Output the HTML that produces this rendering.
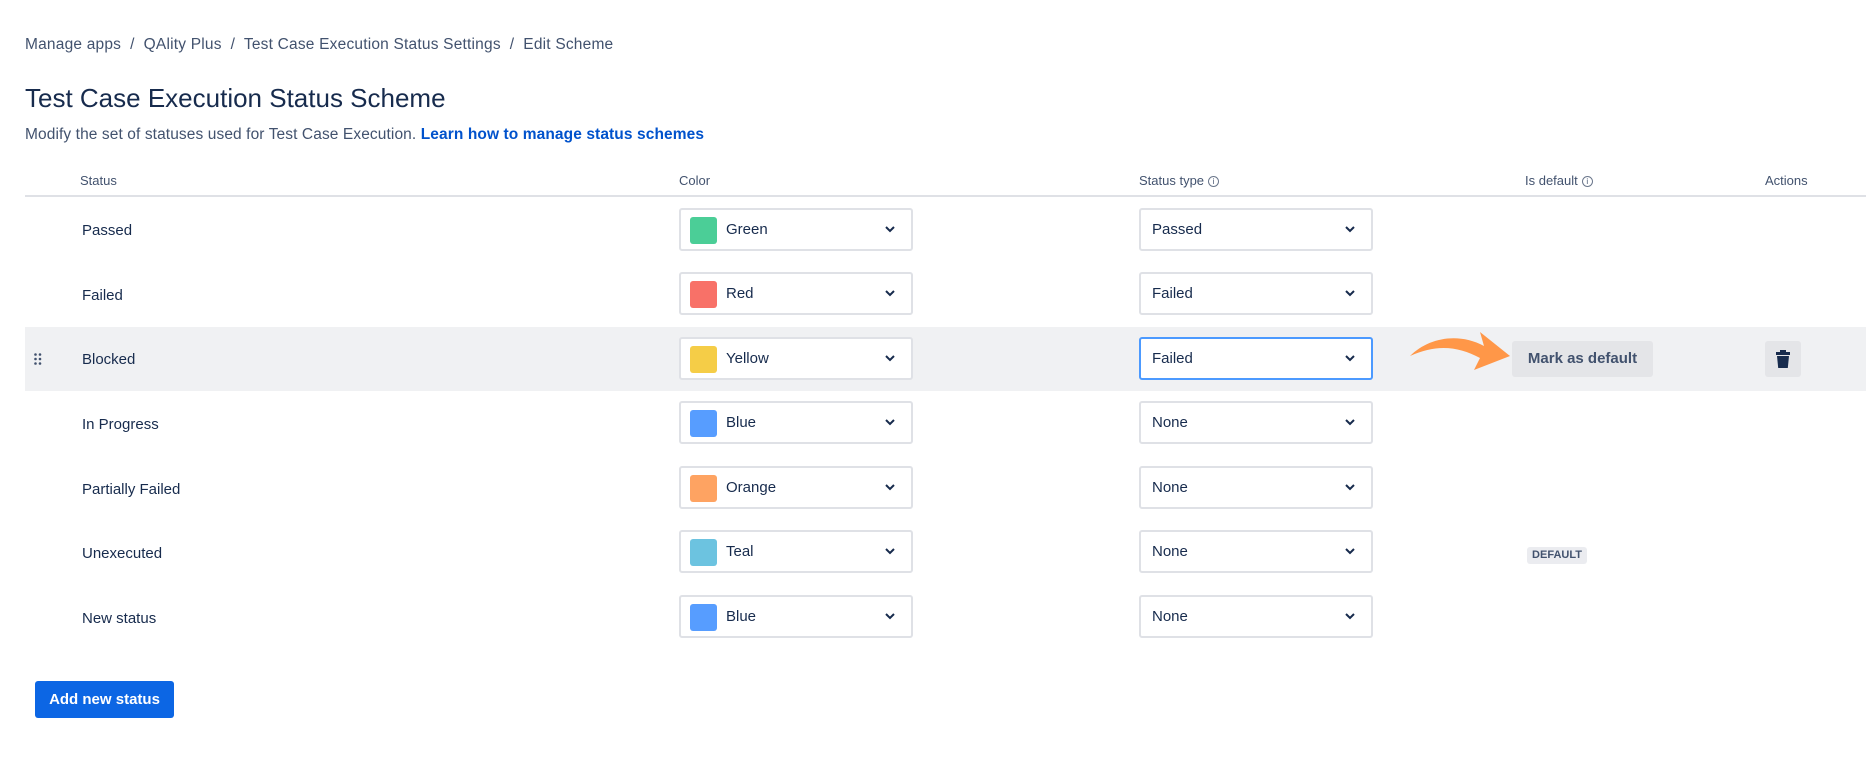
<!DOCTYPE html>
<html><head><meta charset="utf-8"><style>
*{box-sizing:border-box;margin:0;padding:0}
body{width:1870px;height:780px;background:#fff;font-family:"Liberation Sans",sans-serif;color:#172b4d;position:relative;overflow:hidden}
.a{position:absolute;white-space:nowrap}
.bc{left:25px;top:36px;font-size:15.5px;color:#42526e;letter-spacing:0.2px}
.h1{left:25px;top:83px;font-size:26px;color:#172b4d}
.desc{left:25px;top:126px;font-size:15.5px;color:#42526e;letter-spacing:0.1px}
.desc b{color:#0052cc}
.th{top:173px;font-size:13px;color:#42526e}
.th i{display:inline-block;width:11px;height:11px;border:1px solid #6b778c;border-radius:50%;font-size:8px;font-style:normal;text-align:center;line-height:9px;margin-left:4px;vertical-align:1px}
.hl{left:25px;top:195px;width:1841px;height:2px;background:#dfe1e6}
.rowbg{left:25px;top:327px;width:1841px;height:64px;background:#f0f1f3}
.st{left:82px;font-size:15px;color:#172b4d}
.sel{width:234px;height:43px;border:2px solid #dfe1e6;border-radius:3px;background:#fff;font-size:15px;color:#172b4d}
.sel .sw{position:absolute;left:9px;top:7px;width:27px;height:27px;border-radius:3px}
.sel .t{position:absolute;top:11px}
.sel svg{position:absolute;right:16px;top:15px}
.foc{border-color:#4c9aff}
</style></head><body>
<div class="a bc">Manage apps &nbsp;/&nbsp; QAlity Plus &nbsp;/&nbsp; Test Case Execution Status Settings &nbsp;/&nbsp; Edit Scheme</div>
<div class="a h1">Test Case Execution Status Scheme</div>
<div class="a desc">Modify the set of statuses used for Test Case Execution. <b>Learn how to manage status schemes</b></div>
<div class="a th" style="left:80px">Status</div>
<div class="a th" style="left:679px">Color</div>
<div class="a th" style="left:1139px">Status type<i>i</i></div>
<div class="a th" style="left:1525px">Is default<i>i</i></div>
<div class="a th" style="left:1765px">Actions</div>
<div class="a hl"></div>
<div class="a rowbg"></div>
<svg class="a" style="left:34px;top:353px" width="8" height="12"><g fill="#42526e"><circle cx="1.5" cy="1.5" r="1.3"/><circle cx="6" cy="1.5" r="1.3"/><circle cx="1.5" cy="6" r="1.3"/><circle cx="6" cy="6" r="1.3"/><circle cx="1.5" cy="10.5" r="1.3"/><circle cx="6" cy="10.5" r="1.3"/></g></svg>

<div class="a st" style="top:222px">Passed</div>
<div class="a st" style="top:287px">Failed</div>
<div class="a st" style="top:351px">Blocked</div>
<div class="a st" style="top:416px">In Progress</div>
<div class="a st" style="top:481px">Partially Failed</div>
<div class="a st" style="top:545px">Unexecuted</div>
<div class="a st" style="top:610px">New status</div>

<div class="a sel" style="left:679px;top:208px"><span class="sw" style="background:#4bce97"></span><span class="t" style="left:45px">Green</span><svg width="10" height="8"><path d="M1 2l4 4 4-4" stroke="#172b4d" stroke-width="2" fill="none"/></svg></div>
<div class="a sel" style="left:679px;top:272px"><span class="sw" style="background:#f87168"></span><span class="t" style="left:45px">Red</span><svg width="10" height="8"><path d="M1 2l4 4 4-4" stroke="#172b4d" stroke-width="2" fill="none"/></svg></div>
<div class="a sel" style="left:679px;top:337px"><span class="sw" style="background:#f5cd47"></span><span class="t" style="left:45px">Yellow</span><svg width="10" height="8"><path d="M1 2l4 4 4-4" stroke="#172b4d" stroke-width="2" fill="none"/></svg></div>
<div class="a sel" style="left:679px;top:401px"><span class="sw" style="background:#579dff"></span><span class="t" style="left:45px">Blue</span><svg width="10" height="8"><path d="M1 2l4 4 4-4" stroke="#172b4d" stroke-width="2" fill="none"/></svg></div>
<div class="a sel" style="left:679px;top:466px"><span class="sw" style="background:#fea362"></span><span class="t" style="left:45px">Orange</span><svg width="10" height="8"><path d="M1 2l4 4 4-4" stroke="#172b4d" stroke-width="2" fill="none"/></svg></div>
<div class="a sel" style="left:679px;top:530px"><span class="sw" style="background:#6cc3e0"></span><span class="t" style="left:45px">Teal</span><svg width="10" height="8"><path d="M1 2l4 4 4-4" stroke="#172b4d" stroke-width="2" fill="none"/></svg></div>
<div class="a sel" style="left:679px;top:595px"><span class="sw" style="background:#579dff"></span><span class="t" style="left:45px">Blue</span><svg width="10" height="8"><path d="M1 2l4 4 4-4" stroke="#172b4d" stroke-width="2" fill="none"/></svg></div>

<div class="a sel" style="left:1139px;top:208px"><span class="t" style="left:11px">Passed</span><svg width="10" height="8"><path d="M1 2l4 4 4-4" stroke="#172b4d" stroke-width="2" fill="none"/></svg></div>
<div class="a sel" style="left:1139px;top:272px"><span class="t" style="left:11px">Failed</span><svg width="10" height="8"><path d="M1 2l4 4 4-4" stroke="#172b4d" stroke-width="2" fill="none"/></svg></div>
<div class="a sel foc" style="left:1139px;top:337px"><span class="t" style="left:11px">Failed</span><svg width="10" height="8"><path d="M1 2l4 4 4-4" stroke="#172b4d" stroke-width="2" fill="none"/></svg></div>
<div class="a sel" style="left:1139px;top:401px"><span class="t" style="left:11px">None</span><svg width="10" height="8"><path d="M1 2l4 4 4-4" stroke="#172b4d" stroke-width="2" fill="none"/></svg></div>
<div class="a sel" style="left:1139px;top:466px"><span class="t" style="left:11px">None</span><svg width="10" height="8"><path d="M1 2l4 4 4-4" stroke="#172b4d" stroke-width="2" fill="none"/></svg></div>
<div class="a sel" style="left:1139px;top:530px"><span class="t" style="left:11px">None</span><svg width="10" height="8"><path d="M1 2l4 4 4-4" stroke="#172b4d" stroke-width="2" fill="none"/></svg></div>
<div class="a sel" style="left:1139px;top:595px"><span class="t" style="left:11px">None</span><svg width="10" height="8"><path d="M1 2l4 4 4-4" stroke="#172b4d" stroke-width="2" fill="none"/></svg></div>

<svg class="a" style="left:1408px;top:328px" width="104" height="46" viewBox="0 0 104 46"><path d="M2 28 C20 10 50 4 76 18 L72 4 L102 28 L66 42 L72 30 C50 18 28 16 2 28Z" fill="#ff9748"/></svg>
<div class="a" style="left:1512px;top:341px;width:141px;height:36px;background:#e4e5e8;border-radius:3px;font-size:15px;font-weight:bold;color:#42526e;text-align:center;line-height:36px">Mark as default</div>
<div class="a" style="left:1765px;top:341px;width:36px;height:36px;background:#e4e5e8;border-radius:3px"><svg width="36" height="36" viewBox="0 0 36 36" style="position:absolute;left:0;top:0"><rect x="11" y="11" width="14" height="3" fill="#172b4d"/><rect x="15" y="9" width="6" height="3" fill="#172b4d"/><path d="M12 15h12l-1.2 12h-9.6z" fill="#172b4d"/></svg></div>
<div class="a" style="left:1527px;top:547px;width:60px;height:17px;background:#ebecf0;border-radius:3px;font-size:11px;font-weight:bold;color:#42526e;text-align:center;line-height:17px">DEFAULT</div>
<div class="a" style="left:35px;top:681px;width:139px;height:37px;background:#0c66e4;border-radius:3px;font-size:15px;font-weight:bold;color:#fff;text-align:center;line-height:37px">Add new status</div>
</body></html>
